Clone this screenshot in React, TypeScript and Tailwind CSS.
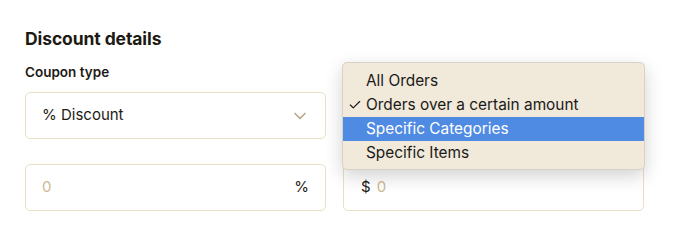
import { ChevronDown, Check } from 'lucide-react';

const options = ['All Orders', 'Orders over a certain amount', 'Specific Categories', 'Specific Items'];

export default function App() {
  const selected = 1;
  const hovered = 2;

  return (
    <div className="w-[700px] h-[239px] bg-white px-[25px] pt-[29px]" style={{ fontFamily: 'Inter, "Noto Sans", sans-serif' }}>
      <h2 className="text-[17.5px] font-bold text-[#1d1a14] leading-5 tracking-[-0.1px]">Discount details</h2>

      <div className="w-[619px] grid grid-cols-2 gap-x-[17px] mt-[15px]">
        {/* Left column */}
        <div>
          <p className="text-[13.5px] font-semibold text-[#1d1a14] leading-4">Coupon type</p>
          <div className="mt-[12px] h-[47px] rounded-[5px] border border-[#eadfc6] flex items-center justify-between pl-[16px] pr-[15px]">
            <span className="text-[15px] text-[#1d1a14]">% Discount</span>
            <ChevronDown className="w-[20px] h-[20px] text-[#b8a68a]" strokeWidth={2} />
          </div>
          <div className="mt-[25px] h-[47px] rounded-[5px] border border-[#eadfc6] flex items-center justify-between pl-[16px] pr-[16px]">
            <span className="text-[15px] text-[#ccb894]">0</span>
            <span className="text-[15px] text-[#1d1a14]">%</span>
          </div>
        </div>

        {/* Right column */}
        <div className="relative">
          <div className="h-4" />
          <div className="mt-[12px] h-[47px] rounded-[5px] border-2 border-[#2d5fd0]" />
          <div className="mt-[25px] h-[47px] rounded-[5px] border border-[#eadfc6] flex items-center pl-[17px] gap-[6px]">
            <span className="text-[15px] text-[#1d1a14]">$</span>
            <span className="text-[15px] text-[#ccb894]">0</span>
          </div>

          {/* Open dropdown menu */}
          <div className="absolute left-[-1px] top-[-2px] w-[303px] rounded-[5px] bg-[#f1e9d9] border border-[#d9d2c4] shadow-[0_6px_18px_rgba(0,0,0,0.18)] pt-[6px] pb-[4px]">
            {options.map((opt, i) => (
              <div
                key={opt}
                className={`h-[24px] flex items-center relative pl-[23px] text-[15.4px] leading-none ${
                  i === hovered ? 'bg-[#4f8ae3] text-white' : 'text-[#1a1a1a]'
                }`}
              >
                {i === selected && (
                  <Check className="absolute left-[5px] w-[14px] h-[14px]" strokeWidth={2} />
                )}
                {opt}
              </div>
            ))}
          </div>
        </div>
      </div>
    </div>
  );
}
